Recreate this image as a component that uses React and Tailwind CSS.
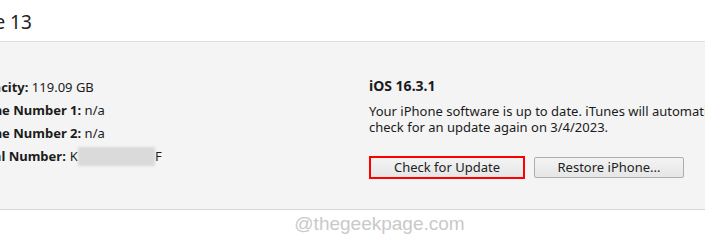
export default function App() {
  const rows = [
    ["Capacity:", "119.09 GB"],
    ["Phone Number 1:", "n/a"],
    ["Phone Number 2:", "n/a"],
  ];

  return (
    <div className="h-[247px] w-[705px] overflow-hidden bg-white text-[#1b1b1b] font-['Noto_Sans',sans-serif]">
      {/* Device title */}
      <div className="h-[42px] border-b border-[#dddddd] pt-[8px]">
        <h1 className="-ml-[57px] whitespace-nowrap text-[19px] leading-[28px] text-[#222]">iPhone 13</h1>
      </div>

      {/* Summary panel */}
      <div className="flex h-[168px] border-b border-[#d6d6d6] bg-[#f4f4f4]">
        <div className="w-[369px] shrink-0 pt-[34px]">
          <div className="-ml-[31px] text-[13px]">
            {rows.map(([label, value]) => (
              <div key={label} className="h-[23px] whitespace-nowrap leading-[23px]">
                <span className="font-bold">{label}</span> {value}
              </div>
            ))}
            <div className="flex h-[23px] items-center whitespace-nowrap leading-[23px]">
              <span className="font-bold">Serial Number:</span>
              <span className="ml-[4px]">K</span>
              <span className="h-[19px] w-[77px] bg-[#dadada] blur-[1px]" />
              <span>F</span>
            </div>
          </div>
        </div>

        <div className="min-w-0 flex-1 whitespace-nowrap pt-[34px] text-[13px]">
          <h2 className="text-[14px] font-bold leading-[20px]">iOS 16.3.1</h2>
          <p className="mt-[7px] leading-[16px]">
            Your iPhone software is up to date. iTunes will automatically
            <br />
            check for an update again on 3/4/2023.
          </p>
          <div className="mt-[21px] flex gap-[9px]">
            <button className="h-[23px] w-[156px] border-2 border-[#ff0000] bg-gradient-to-b from-[#f3f3f3] to-[#e6e6e6] text-[13px] text-[#222]">
              Check for Update
            </button>
            <button className="mt-[1px] h-[21px] w-[150px] rounded-[2px] border border-[#adadad] bg-gradient-to-b from-[#f3f3f3] to-[#e6e6e6] text-[13px] text-[#222]">
              Restore iPhone...
            </button>
          </div>
        </div>
      </div>

      {/* Watermark */}
      <div className="flex justify-center pl-[54px] pt-[1px]">
        <span className="text-[19px] leading-[26px] text-[#c9c9c9] font-['Liberation_Sans',sans-serif]">@thegeekpage.com</span>
      </div>
    </div>
  );
}
